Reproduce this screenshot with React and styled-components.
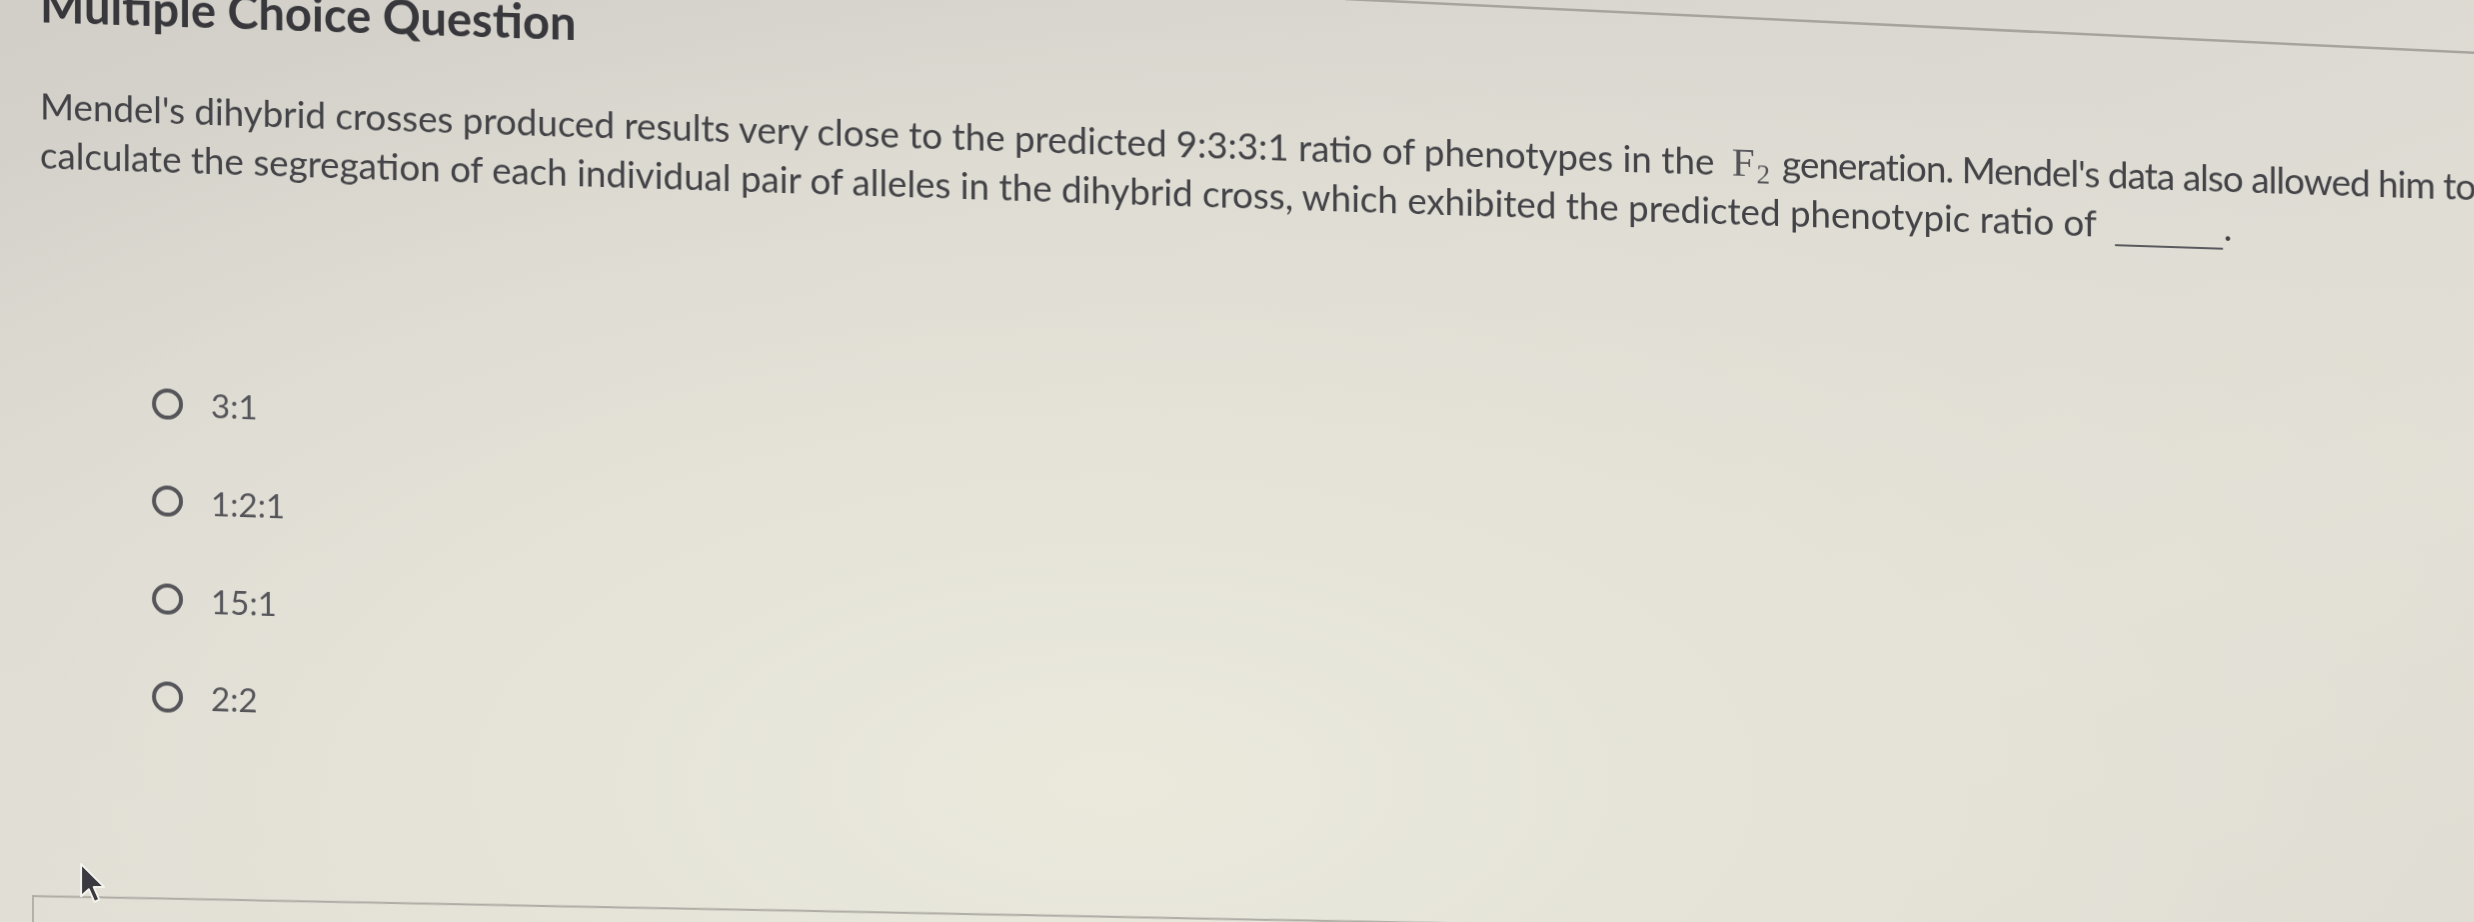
import styled, { createGlobalStyle } from "styled-components";

const GlobalStyle = createGlobalStyle`
  html, body {
    margin: 0;
    padding: 0;
    overflow: hidden;
    background: #dcdad1;
  }
`;

const options = ["3:1", "1:2:1", "15:1", "2:2"];

export default function App() {
  return (
    <>
      <GlobalStyle />
      <Page>
        <Sheet>
          <Title>Multiple Choice Question</Title>
          <Question>
            <Line>
              Mendel's dihybrid crosses produced results very close to the predicted 9:3:3:1 ratio
              of phenotypes in the <Formula>F<Sub>2</Sub></Formula>
              <Tail>generation. Mendel's data also allowed him to</Tail>
            </Line>
            <Line>
              calculate the segregation of each individual pair of alleles in the dihybrid cross,
              which exhibited the predicted phenotypic ratio of <Blank />.
            </Line>
          </Question>
          <OptionList>
            {options.map((o) => (
              <Option key={o}>
                <Radio />
                <OptionText>{o}</OptionText>
              </Option>
            ))}
          </OptionList>
          <NextCard />
        </Sheet>
        <EdgeLine viewBox="0 0 2474 922" preserveAspectRatio="none">
          <line x1="1345" y1="-1" x2="2480" y2="53" stroke="#a7a49d" strokeWidth="2.5" />
        </EdgeLine>
        <Cursor viewBox="0 0 20 32">
          <path
            d="M1.5 1 L1.5 24 L7 19 L11 28 L14.5 26.5 L10.5 17.5 L18 17.5 Z"
            fill="#3a3a40"
            stroke="#f4f3ec"
            strokeWidth="1.4"
            strokeLinejoin="round"
          />
        </Cursor>
      </Page>
    </>
  );
}

const Page = styled.div`
  position: relative;
  width: 2474px;
  height: 922px;
  overflow: hidden;
  background:
    radial-gradient(ellipse 70% 90% at 45% 85%, #eae9dc 0%, #e5e3d8 40%, rgba(228, 226, 215, 0) 100%),
    linear-gradient(160deg, #d2cfc8 0%, #dbd9d1 45%, #e2e0d6 75%, #dcdad1 100%);
`;

const Sheet = styled.div`
  transform: skewY(1.9deg);
  transform-origin: 0 0;
  padding-left: 40px;
  font-family: Lato, "Open Sans", sans-serif;
  filter: blur(0.6px);
`;

const Title = styled.h2`
  margin: -20px 0 0 0;
  font-size: 47px;
  line-height: 47px;
  font-weight: 700;
  color: #38383c;
  white-space: nowrap;
`;

const Question = styled.p`
  margin: 53px 0 0 0;
  font-size: 36.7px;
  line-height: 49px;
  color: #434347;
`;

const Line = styled.span`
  display: block;
  white-space: nowrap;
`;

const Tail = styled.span`
  letter-spacing: -0.9px;
`;

const Formula = styled.span`
  font-family: "Liberation Serif", serif;
  font-size: 1.12em;
  line-height: 0;
  color: #55555a;
  margin: 0 12px 0 8px;
`;

const Sub = styled.sub`
  font-size: 0.66em;
  line-height: 0;
  vertical-align: -0.26em;
  margin-left: 2px;
`;

const Blank = styled.span`
  display: inline-block;
  width: 108px;
  margin-left: 10px;
  border-bottom: 2px solid #5a5a5e;
  vertical-align: -9px;
`;

const OptionList = styled.div`
  margin-top: 190px;
  margin-left: 112px;
  display: flex;
  flex-direction: column;
  gap: 37.8px;
`;

const Option = styled.label`
  display: flex;
  align-items: center;
  height: 60px;
  gap: 28px;
`;

const Radio = styled.span`
  box-sizing: border-box;
  width: 31px;
  height: 31px;
  border: 4.5px solid #56565a;
  border-radius: 50%;
`;

const OptionText = styled.span`
  font-size: 33px;
  color: #55555a;
`;

const NextCard = styled.div`
  margin-top: 173px;
  margin-left: -8px;
  width: 2500px;
  height: 200px;
  border-top: 2px solid #aeaca5;
  border-left: 2px solid #b3b1aa;
  transform: skewY(-0.8deg);
  transform-origin: 0 0;
`;

const EdgeLine = styled.svg`
  position: absolute;
  inset: 0;
  width: 100%;
  height: 100%;
  pointer-events: none;
  filter: blur(0.6px);
`;

const Cursor = styled.svg`
  position: absolute;
  left: 79px;
  top: 862px;
  width: 28px;
  height: 46px;
  filter: blur(0.5px);
`;
